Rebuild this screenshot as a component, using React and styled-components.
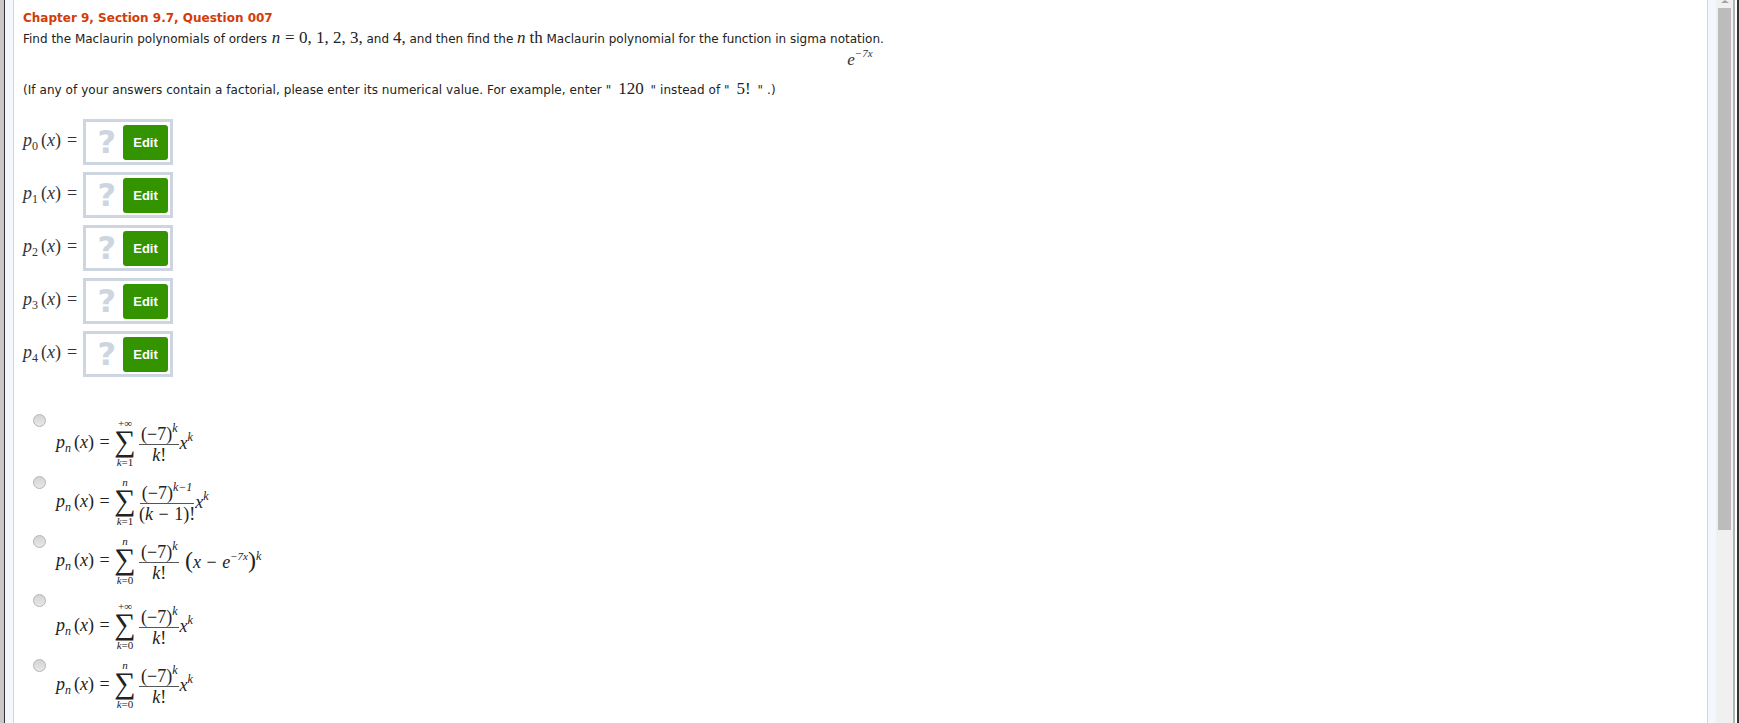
import styled, { createGlobalStyle } from "styled-components";

const GlobalStyle = createGlobalStyle`
  html, body {
    margin: 0;
    padding: 0;
    height: 100%;
    overflow: hidden;
    background: #fff;
  }
  #root {
    height: 100%;
  }
`;

const Frame = styled.div`
  display: flex;
  height: 723px;
  width: 1739px;
  overflow: hidden;
  color: #222;
  font-family: "DejaVu Sans", Verdana, sans-serif;
`;

const LeftEdge = styled.div`
  flex: none;
  width: 5px;
  background: #c8c8c8;
  border-right: 1px solid #333;
  box-sizing: border-box;
`;

const LeftGutter = styled.div`
  flex: none;
  width: 9px;
  background: #f4f7fc;
  border-right: 1px solid #ccd5e0;
  box-sizing: border-box;
`;

const Content = styled.main`
  flex: 1;
  min-width: 0;
  padding: 11px 0 0 9px;
`;

const RightGutter = styled.div`
  flex: none;
  width: 9px;
  background: #f4f7fc;
  border-left: 1px solid #ccd5e0;
  box-sizing: border-box;
`;

const Track = styled.div`
  flex: none;
  width: 17px;
  background: #f0f0f0;
  padding: 0 2px;
  box-sizing: border-box;
`;

const TrackArrow = styled.div`
  width: 0;
  height: 0;
  margin: 0 auto 5px;
  border-left: 4px solid transparent;
  border-right: 4px solid transparent;
  border-bottom: 3px solid #a3a3a3;
`;

const Thumb = styled.div`
  height: 522px;
  background: #bcbcbc;
`;

const RightEdge = styled.div`
  flex: none;
  width: 6px;
  background: #fff;
  border-left: 2px solid #b4b4b4;
  border-right: 2px solid #333;
  box-sizing: border-box;
`;

const Heading = styled.h1`
  margin: 0;
  font-size: 12px;
  line-height: 15px;
  font-weight: 700;
  color: #d23c0a;
`;

const Para = styled.p`
  margin: ${(p) => p.$top || 0}px 0 0;
  font-size: 12px;
  line-height: 20px;
  letter-spacing: ${(p) => p.$spacing || 0}px;
  white-space: nowrap;
`;

const M = styled.span`
  font-family: "Liberation Serif", "Times New Roman", serif;
  font-size: ${(p) => p.$size || 17}px;
  font-style: ${(p) => (p.$i ? "italic" : "normal")};
  letter-spacing: 0;
  margin: 0 ${(p) => p.$pad || 0}px;
`;

const Centered = styled.div`
  width: 1674px;
  text-align: center;
  height: 23px;
  line-height: 22px;
  color: #333;
`;

const Answers = styled.div`
  display: flex;
  flex-direction: column;
  gap: 7px;
  margin-top: 19px;
`;

const AnswerRow = styled.div`
  display: flex;
  align-items: center;
`;

const AnswerLabel = styled.div`
  width: 60px;
  flex: none;
  box-sizing: border-box;
  padding-bottom: 4px;
  white-space: nowrap;
  word-spacing: 1.5px;
  font-family: "Liberation Serif", "Times New Roman", serif;
  font-size: 18px;
  color: #333;
`;

const Sub = styled.sub`
  font-size: 12px;
  line-height: 0;
  vertical-align: -4px;
  margin-right: 3px;
`;

const Sup = styled.sup`
  font-size: ${(p) => p.$size || 12}px;
  line-height: 0;
  font-style: italic;
  vertical-align: 8px;
`;

const AnswerBox = styled.div`
  box-sizing: border-box;
  width: 90px;
  height: 46px;
  border: 3px solid #ccd5e0;
  display: flex;
  align-items: center;
  justify-content: flex-end;
  padding-right: 2px;
  gap: 7px;
`;

const Question = styled.span`
  font-family: "DejaVu Sans", Verdana, sans-serif;
  font-size: 32px;
  font-weight: 700;
  color: #ccd5e0;
`;

const EditButton = styled.button`
  width: 45px;
  height: 35px;
  border: 0;
  border-radius: 3px;
  padding: 0;
  background: #339400;
  color: #fff;
  font-family: "Liberation Sans", Arial, sans-serif;
  font-size: 13px;
  font-weight: 700;
`;

const Options = styled.div`
  margin: 37px 0 0 10px;
  display: flex;
  flex-direction: column;
  gap: 12px;
`;

const Option = styled.div`
  display: flex;
  align-items: flex-start;
`;

const Radio = styled.span`
  flex: none;
  width: 13px;
  height: 13px;
  box-sizing: border-box;
  border-radius: 50%;
  border: 1px solid #b5b5b5;
  background: linear-gradient(#d4d4d4, #e8e8e8);
`;

const Formula = styled.div`
  display: flex;
  align-items: center;
  height: 44px;
  margin: ${(p) => p.$top}px 0 0 10px;
  font-family: "Liberation Serif", "Times New Roman", serif;
  font-size: 18px;
  color: #222;
  white-space: nowrap;
  word-spacing: 1px;
`;

const Lhs = styled.span`
  width: 60px;
  flex: none;
`;

const Sum = styled.span`
  display: flex;
  flex-direction: column;
  align-items: center;
  width: 18px;
  margin-right: 5px;
`;

const Limit = styled.span`
  font-size: 11px;
  line-height: 10px;
  margin-bottom: ${(p) => p.$gap || 0}px;
`;

const Sigma = styled.span`
  font-size: 30px;
  line-height: 20px;
  height: 26px;
`;

const Frac = styled.span`
  display: flex;
  flex-direction: column;
  align-items: center;
  margin-top: 4px;
`;

const Num = styled.span`
  padding: 0 2px;
  line-height: 20px;
  border-bottom: 1px solid #555;
`;

const Den = styled.span`
  line-height: 20px;
`;

const Trail = styled.span`
  margin-top: 3px;
`;

const Paren = styled.span`
  font-size: 24px;
  font-weight: 400;
  line-height: 20px;
`;

const I = styled.i``;

const Pn = () => (
  <Lhs>
    <I>p</I><Sub><I>n</I></Sub>(<I>x</I>) =
  </Lhs>
);

const SumSign = ({ top, bottom }) => (
  <Sum>
    <Limit $gap={3}>{top}</Limit>
    <Sigma>∑</Sigma>
    <Limit><I>k</I>={bottom}</Limit>
  </Sum>
);

const XPower = () => (
  <Trail><I>x</I><Sup>k</Sup></Trail>
);

const subscripts = [0, 1, 2, 3, 4];

export default function App() {
  return (
    <Frame>
      <GlobalStyle />
      <LeftEdge />
      <LeftGutter />
      <Content>
        <Heading>Chapter 9, Section 9.7, Question 007</Heading>
        <Para $top={2}>
          Find the Maclaurin polynomials of orders <M $i $pad={1}>n</M> <M>= 0, 1, 2, 3,</M> and <M>4,</M> and then find the <M $i>n</M> <M>th</M> Maclaurin polynomial for the function in sigma notation.
        </Para>
        <Centered>
          <M $i $size={17}>e<Sup $size={11}>−7x</Sup></M>
        </Centered>
        <Para $top={7} $spacing={0.06}>
          (If any of your answers contain a factorial, please enter its numerical value. For example, enter " <M $pad={3}>120</M> " instead of " <M $pad={3}>5!</M> " .)
        </Para>
        <Answers>
          {subscripts.map((n) => (
            <AnswerRow key={n}>
              <AnswerLabel><I>p</I><Sub>{n}</Sub>(<I>x</I>) =</AnswerLabel>
              <AnswerBox>
                <Question>?</Question>
                <EditButton>Edit</EditButton>
              </AnswerBox>
            </AnswerRow>
          ))}
        </Answers>
        <Options>
          <Option>
            <Radio />
            <Formula $top={6}>
              <Pn />
              <SumSign top="+∞" bottom={1} />
              <Frac><Num>(−7)<Sup>k</Sup></Num><Den><I>k</I>!</Den></Frac>
              <XPower />
            </Formula>
          </Option>
          <Option>
            <Radio />
            <Formula $top={3}>
              <Pn />
              <SumSign top={<I>n</I>} bottom={1} />
              <Frac><Num>(−7)<Sup>k−1</Sup></Num><Den>(<I>k</I> − 1)!</Den></Frac>
              <XPower />
            </Formula>
          </Option>
          <Option>
            <Radio />
            <Formula $top={3}>
              <Pn />
              <SumSign top={<I>n</I>} bottom={0} />
              <Frac><Num>(−7)<Sup>k</Sup></Num><Den><I>k</I>!</Den></Frac>
              <Trail>&nbsp;<Paren>(</Paren><I>x</I> − <I>e</I><Sup $size={11}>−7x</Sup><Paren>)</Paren><Sup>k</Sup></Trail>
            </Formula>
          </Option>
          <Option>
            <Radio />
            <Formula $top={9}>
              <Pn />
              <SumSign top="+∞" bottom={0} />
              <Frac><Num>(−7)<Sup>k</Sup></Num><Den><I>k</I>!</Den></Frac>
              <XPower />
            </Formula>
          </Option>
          <Option>
            <Radio />
            <Formula $top={3}>
              <Pn />
              <SumSign top={<I>n</I>} bottom={0} />
              <Frac><Num>(−7)<Sup>k</Sup></Num><Den><I>k</I>!</Den></Frac>
              <XPower />
            </Formula>
          </Option>
        </Options>
      </Content>
      <RightGutter />
      <Track><TrackArrow /><Thumb /></Track>
      <RightEdge />
    </Frame>
  );
}
